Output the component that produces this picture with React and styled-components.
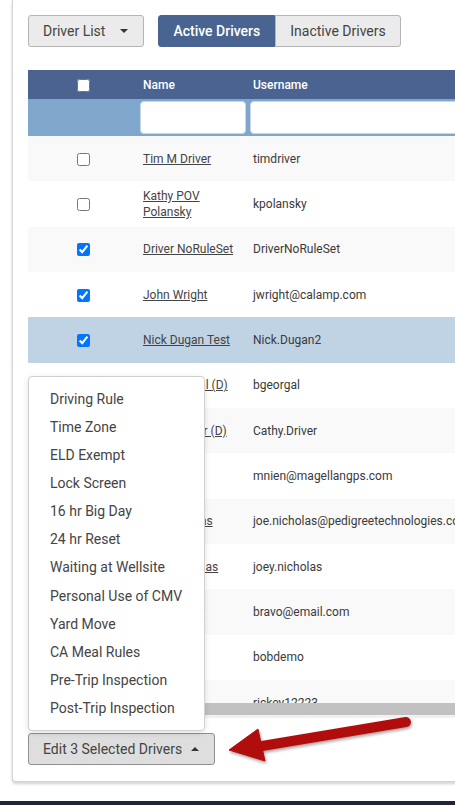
import React from 'react';
import styled, { createGlobalStyle } from 'styled-components';

const GlobalStyle = createGlobalStyle`
  body {
    margin: 0;
    background: #fff;
    font-family: Roboto, 'Liberation Sans', sans-serif;
    overflow: hidden;
  }
`;

const drivers = [
  { name: 'Tim M Driver', user: 'timdriver' },
  { name: 'Kathy POV Polansky', user: 'kpolansky' },
  { name: 'Driver NoRuleSet', user: 'DriverNoRuleSet', checked: true },
  { name: 'John Wright', user: 'jwright@calamp.com', checked: true },
  { name: 'Nick Dugan Test', user: 'Nick.Dugan2', checked: true, active: true },
  { name: 'Bob Georgal (D)', user: 'bgeorgal' },
  { name: 'Cathy Driver (D)', user: 'Cathy.Driver' },
  { name: 'Mike Nien', user: 'mnien@magellangps.com' },
  { name: 'Joe Nicholas', user: 'joe.nicholas@pedigreetechnologies.com' },
  { name: 'Joey Nicholas', user: 'joey.nicholas' },
  { name: 'Bravo Actor', user: 'bravo@email.com' },
  { name: 'Bob Demo', user: 'bobdemo' },
  { name: 'Rickey Test', user: 'rickey12223' },
];

const editOptions = [
  'Driving Rule',
  'Time Zone',
  'ELD Exempt',
  'Lock Screen',
  '16 hr Big Day',
  '24 hr Reset',
  'Waiting at Wellsite',
  'Personal Use of CMV',
  'Yard Move',
  'CA Meal Rules',
  'Pre-Trip Inspection',
  'Post-Trip Inspection',
];

const App = () => {
  return (
    <Page>
      <GlobalStyle />
      <Card>
        <Toolbar>
          <Button $gap={15}>
            Driver List <Caret />
          </Button>
          <Segment>
            <SegButton $active>Active Drivers</SegButton>
            <SegButton>Inactive Drivers</SegButton>
          </Segment>
        </Toolbar>

        <TableViewport>
          <Table>
            <colgroup>
              <col style={{ width: 110 }} />
              <col style={{ width: 110 }} />
              <col style={{ width: 400 }} />
            </colgroup>
            <thead>
              <HeadRow>
                <CheckCell as='th'>
                  <input type='checkbox' readOnly />
                </CheckCell>
                <HeadCell>Name</HeadCell>
                <HeadCell>Username</HeadCell>
              </HeadRow>
              <FilterRow>
                <th />
                <FilterCell>
                  <FilterInput />
                </FilterCell>
                <FilterCell>
                  <FilterInput />
                </FilterCell>
              </FilterRow>
            </thead>
            <tbody>
              {drivers.map((d, i) => (
                <Row key={d.user} $striped={i % 2 === 0} $active={d.active}>
                  <CheckCell>
                    <input type='checkbox' checked={!!d.checked} readOnly />
                  </CheckCell>
                  <Cell>
                    <NameLink>{d.name}</NameLink>
                  </Cell>
                  <Cell>{d.user}</Cell>
                </Row>
              ))}
            </tbody>
          </Table>
        </TableViewport>
        <ScrollTrack>
          <ScrollThumb />
        </ScrollTrack>

        <Footer>
          <Menu>
            {editOptions.map((o) => (
              <MenuItem key={o}>{o}</MenuItem>
            ))}
          </Menu>
          <Button $pressed $gap={9}>
            Edit 3 Selected Drivers <Caret $up />
          </Button>
          <Arrow width='200' height='60' viewBox='0 0 200 60'>
            <defs>
              <filter id='sh' x='-20%' y='-50%' width='140%' height='200%'>
                <feDropShadow dx='1' dy='2' stdDeviation='1.5' floodColor='#000' floodOpacity='0.35' />
              </filter>
            </defs>
            <g filter='url(#sh)' fill='#b10d0d' stroke='#b10d0d'>
              <line x1='186' y1='12' x2='36' y2='37' strokeWidth='10' strokeLinecap='round' />
              <polygon points='9,40 38,19 45,51' strokeWidth='1' strokeLinejoin='round' />
            </g>
          </Arrow>
        </Footer>
      </Card>
      <BottomBar />
    </Page>
  );
};

const Page = styled.div`
  height: 805px;
  display: flex;
  flex-direction: column;
  overflow: hidden;
`;

const Card = styled.section`
  margin-left: 12px;
  width: 560px;
  padding: 15px 15px 16px;
  border: 1px solid #d4d4d4;
  border-top: none;
  border-radius: 0 0 4px 4px;
  box-shadow: 0 2px 3px rgba(0, 0, 0, 0.18);
  background: #fff;
`;

const Toolbar = styled.div`
  display: flex;
  gap: 14px;
  height: 32px;
`;

const Button = styled.button`
  display: inline-flex;
  align-items: center;
  gap: ${(p) => p.$gap}px;
  height: 32px;
  padding: 0 15px 0 14px;
  font-family: Roboto, 'Liberation Sans', sans-serif;
  font-size: 14px;
  color: #444;
  background: ${(p) => (p.$pressed ? '#dedede' : '#ebebeb')};
  border: 1px solid ${(p) => (p.$pressed ? '#8f8f8f' : '#b5b5b5')};
  border-radius: 3px;
`;

const Caret = styled.span`
  width: 0;
  height: 0;
  border-left: 4px solid transparent;
  border-right: 4px solid transparent;
  ${(p) =>
    p.$up ? 'border-bottom: 4px solid #333;' : 'border-top: 4px solid #333;'}
`;

const Segment = styled.div`
  display: flex;
`;

const SegButton = styled.button`
  height: 32px;
  padding: 0 14px;
  font-family: Roboto, 'Liberation Sans', sans-serif;
  font-size: 14px;
  font-weight: ${(p) => (p.$active ? 500 : 400)};
  color: ${(p) => (p.$active ? '#fff' : '#444')};
  background: ${(p) => (p.$active ? '#4a6491' : '#ebebeb')};
  border: 1px solid ${(p) => (p.$active ? '#4a6491' : '#b5b5b5')};
  border-radius: ${(p) => (p.$active ? '3px 0 0 3px' : '0 3px 3px 0')};
`;

const TableViewport = styled.div`
  margin-top: 23px;
  height: 633px;
  overflow: hidden;
`;

const Table = styled.table`
  width: 620px;
  table-layout: fixed;
  border-collapse: collapse;
  font-size: 12px;
  color: #3a3a3a;
`;

const HeadRow = styled.tr`
  height: 29px;
  background: #4a6390;
`;

const HeadCell = styled.th`
  padding: 0 5px;
  text-align: left;
  font-weight: 500;
  color: #fff;
`;

const FilterRow = styled.tr`
  height: 37px;
  background: #7fa7cc;
`;

const FilterCell = styled.th`
  padding: 2px 2px;
`;

const FilterInput = styled.input`
  display: block;
  box-sizing: border-box;
  width: 100%;
  height: 33px;
  border: 1px solid #c9d8e8;
  border-radius: 4px;
  background: #fff;
`;

const Row = styled.tr`
  height: 45.33px;
  background: ${(p) => (p.$active ? '#c0d3e5' : p.$striped ? '#f9f9f9' : '#fff')};
`;

const Cell = styled.td`
  padding: 0 5px;
  line-height: 16px;
`;

const CheckCell = styled.td`
  text-align: center;
  input {
    margin: 0;
    width: 13px;
    height: 13px;
    vertical-align: middle;
  }
`;

const NameLink = styled.a`
  color: #444;
  text-decoration: underline;
`;

const ScrollTrack = styled.div`
  width: 560px;
  height: 15px;
  background: #f1f1f1;
`;

const ScrollThumb = styled.div`
  height: 12px;
  background: #c1c1c1;
`;

const Footer = styled.div`
  position: relative;
  margin-top: 15px;
  height: 32px;
`;

const Menu = styled.ul`
  position: absolute;
  left: 0;
  bottom: 34px;
  box-sizing: border-box;
  width: 177px;
  margin: 0;
  padding: 8px 0;
  list-style: none;
  background: #fff;
  border: 1px solid #d0d0d0;
  border-radius: 4px;
  box-shadow: 0 2px 6px rgba(0, 0, 0, 0.12);
  z-index: 2;
`;

const MenuItem = styled.li`
  height: 28.1px;
  line-height: 28px;
  padding-left: 21px;
  font-size: 14px;
  color: #444;
  white-space: nowrap;
`;

const Arrow = styled.svg`
  position: absolute;
  left: 192px;
  top: -23px;
  z-index: 3;
`;

const BottomBar = styled.div`
  margin-top: auto;
  height: 4px;
  background: #1f2534;
`;

export default App;
